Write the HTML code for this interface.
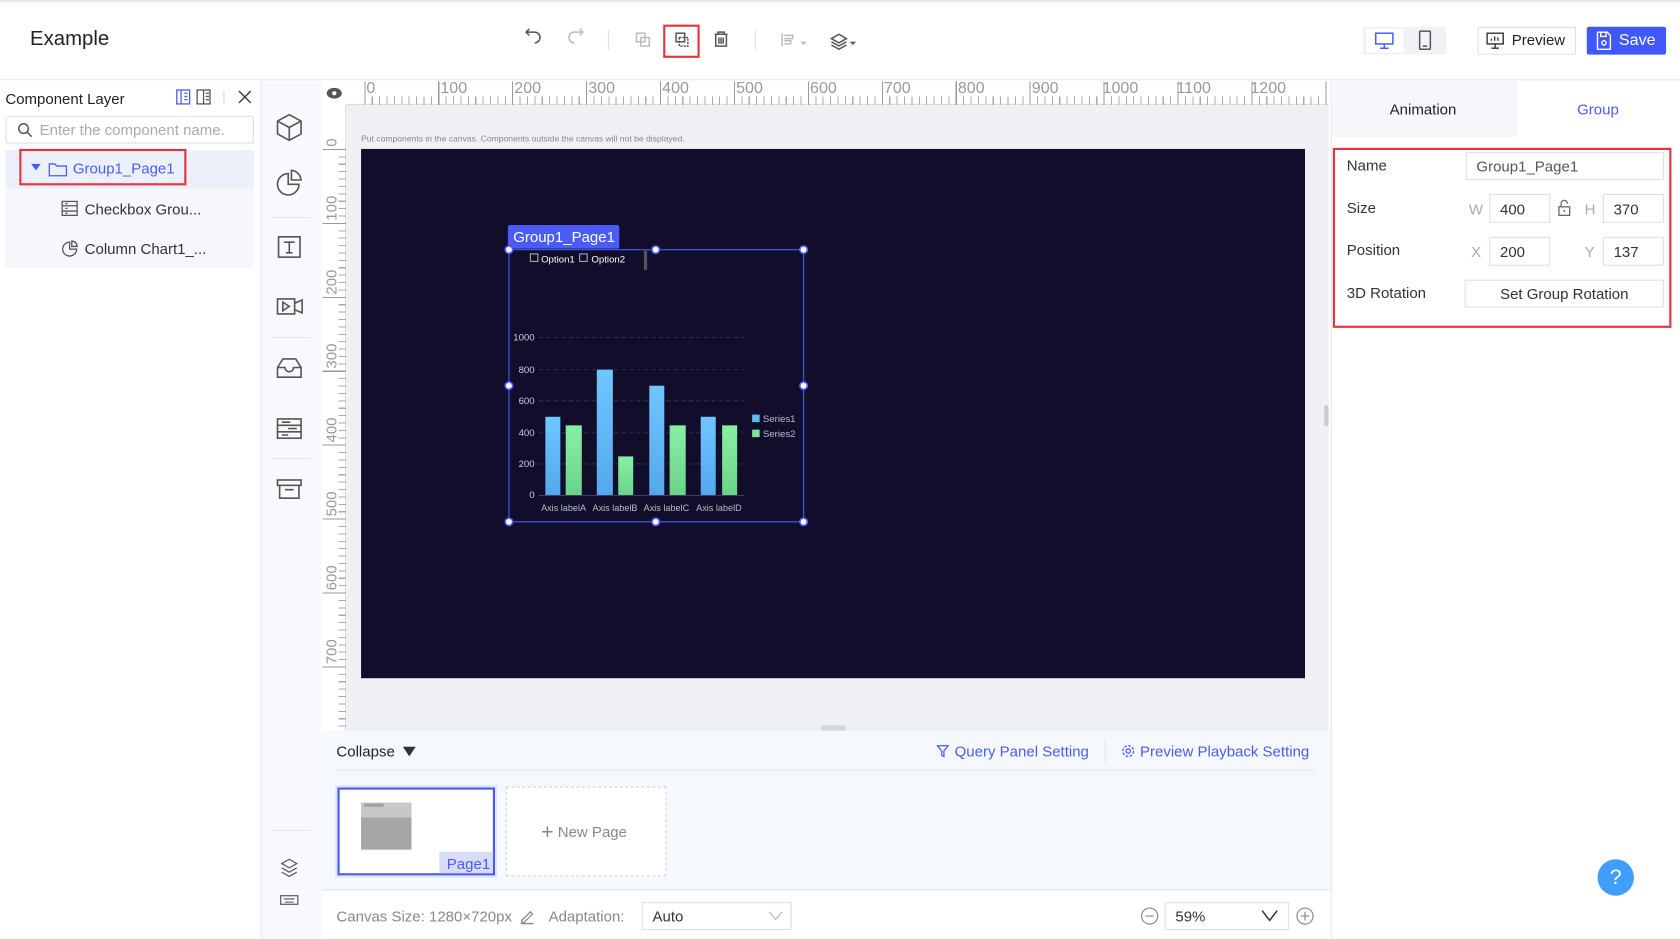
<!DOCTYPE html>
<html><head><meta charset="utf-8">
<style>
*{box-sizing:border-box;margin:0;padding:0}
html,body{width:1680px;height:938px;overflow:hidden;background:#fff;font-family:"Liberation Sans",sans-serif;color:#333}
#w{position:absolute;left:0;top:0;width:1568px;height:876px;transform:scale(1.07143);transform-origin:0 0}
.a{position:absolute}
.t{position:absolute;white-space:nowrap}
.inp{position:absolute;border:1px solid #dcdfe6;background:#fff;font-size:14px;color:#333;padding-left:9px;display:flex;align-items:center}
.lbl{position:absolute;font-size:14px;color:#333}
</style></head><body><div id="w">
<!-- top bar -->
<div class="a" style="left:0;top:0;width:1568px;height:2px;background:#e4e6ea"></div>
<div class="a" style="left:0;top:74px;width:1568px;height:1px;background:#e4e7ed"></div>
<div class="t" style="left:28px;top:26px;font-size:19px;color:#222">Example</div>
<svg class="a" style="left:480px;top:20px" width="330" height="36" viewBox="480 20 330 36" fill="none" stroke-width="1.4">
<path d="M494 33l-3 3 3 3M491 36h8a5 5 0 0 1 0 10" stroke="#555" transform="translate(0,-6)"/>
<path d="M541 33l3 3-3 3M544 36h-8a5 5 0 0 0 0 10" stroke="#bbb" transform="translate(0,-6)"/>
<line x1="568" y1="28" x2="568" y2="47" stroke="#e6e6e6"/>
<rect x="594" y="31" width="8" height="8" stroke="#bbb"/><rect x="598" y="35" width="8" height="8" stroke="#bbb"/>
<rect x="620" y="24" width="32" height="29" stroke="#e8323c" stroke-width="2"/>
<rect x="631" y="31" width="8" height="8" stroke="#555"/><rect x="634" y="35" width="8" height="8" stroke="#555" stroke-dasharray="2 1"/>
<path d="M667 32h12M670 32v-2h6v2M668 32v11h10v-11M671 35v6M673 35v6M675 35v6" stroke="#555"/>
<line x1="705" y1="28" x2="705" y2="47" stroke="#e6e6e6"/>
<path d="M730 31v12M732 33h8v3h-8M732 38h6v3h-6" stroke="#bbb"/><path d="M747 39l3 3 3-3z" fill="#bbb" stroke="none"/>
<path d="M776 36l7-4 7 4-7 4zM776 39l7 4 7-4M776 42l7 4 7-4" stroke="#555"/><path d="M793 39l3 3 3-3z" fill="#555" stroke="none"/>
</svg>
<div class="a" style="left:1272px;top:25px;width:78px;height:26px;background:#f0f2f5;border-radius:2px"></div>
<div class="a" style="left:1275px;top:27px;width:35px;height:22px;background:#fff"></div>
<svg class="a" style="left:1280px;top:28px" width="64" height="20" fill="none" stroke-width="1.4"><rect x="4" y="3" width="16" height="10" stroke="#4a5cf5"/><path d="M8 17h8M12 13v4" stroke="#4a5cf5"/><rect x="45" y="1" width="10" height="17" rx="1" stroke="#555"/><path d="M48 15h4" stroke="#555"/></svg>
<div class="a" style="left:1379px;top:25px;width:92px;height:26px;border:1px solid #dcdfe6;border-radius:2px"></div>
<svg class="a" style="left:1387px;top:30px" width="18" height="16" fill="none" stroke="#333" stroke-width="1.3"><rect x="1" y="1" width="15" height="10"/><path d="M5 15h7M8.5 11v4M5 8v-2M8 8v-4M11 8v-3"/></svg>
<div class="t" style="left:1411px;top:29px;font-size:14px;color:#222">Preview</div>
<div class="a" style="left:1481px;top:25px;width:74px;height:26px;background:#4058f8;border-radius:2px"></div>
<svg class="a" style="left:1489px;top:29px" width="16" height="18" fill="none" stroke="#fff" stroke-width="1.3"><path d="M2 1h9l3 3v13h-12z"/><rect x="5" y="1" width="5" height="4"/><circle cx="8" cy="11" r="2"/></svg>
<div class="t" style="left:1511px;top:29px;font-size:15px;color:#fff">Save</div>

<!-- left panel -->
<div class="a" style="left:0;top:75px;width:243px;height:801px;background:#fff"></div>
<div class="t" style="left:5px;top:84px;font-size:14px;color:#222">Component Layer</div>
<svg class="a" style="left:164px;top:83px" width="75" height="16" fill="none" stroke-width="1.2"><rect x="1" y="1" width="12" height="13" stroke="#4a5cf5"/><path d="M5 1v13M8 4h3M8 7h3M8 10h3" stroke="#4a5cf5"/><rect x="20" y="1" width="12" height="13" stroke="#555"/><path d="M26 1v13M28 4h3M28 7h3M28 10h3" stroke="#555"/><path d="M45 2v12" stroke="#ddd"/><path d="M59 2l11 11M70 2l-11 11" stroke="#444" stroke-width="1.4"/></svg>
<div class="a" style="left:5px;top:108px;width:232px;height:26px;border:1px solid #dcdfe6;border-radius:2px"></div>
<svg class="a" style="left:16px;top:114px" width="16" height="16" fill="none" stroke="#555" stroke-width="1.4"><circle cx="6" cy="6" r="4.5"/><path d="M9.5 9.5l4 4"/></svg>
<div class="t" style="left:37px;top:113px;font-size:14px;color:#aaa">Enter the component name.</div>
<div class="a" style="left:5px;top:140px;width:232px;height:110px;background:#f5f7fb"></div>
<div class="a" style="left:5px;top:140px;width:232px;height:36px;background:#ebf0fb"></div>
<div class="a" style="left:18px;top:139px;width:156px;height:34px;border:2px solid #e8323c"></div>
<svg class="a" style="left:28px;top:150px" width="40" height="16" fill="none"><path d="M1 3h9l-4.5 6z" fill="#4a5cf5"/><path d="M18 3h5l2 2h9v9h-16z" stroke="#4a5cf5" stroke-width="1.2"/></svg>
<div class="t" style="left:68px;top:149px;font-size:14px;color:#4a5cf5">Group1_Page1</div>
<svg class="a" style="left:57px;top:187px" width="16" height="16" fill="none" stroke="#555" stroke-width="1.2"><rect x="1" y="1" width="14" height="13"/><path d="M1 5h14M1 10h14M4 3h2M4 7.5h2M4 12h2"/></svg>
<div class="t" style="left:79px;top:187px;font-size:14px;color:#333">Checkbox Grou...</div>
<svg class="a" style="left:57px;top:224px" width="16" height="16" fill="none" stroke="#555" stroke-width="1.2"><path d="M8 2a6.5 6.5 0 1 0 6.5 6.5H8z"/><path d="M10 1a5 5 0 0 1 5 5h-5z"/></svg>
<div class="t" style="left:79px;top:224px;font-size:14px;color:#333">Column Chart1_...</div>

<!-- icon bar -->
<div class="a" style="left:243px;top:75px;width:57px;height:801px;background:#f7f9fc;border-left:1px solid #eceef2"></div>
<svg class="a" style="left:243px;top:75px" width="57" height="801" fill="none" stroke="#555" stroke-width="1.5">
<path d="M27 32l11 6v12l-11 6-11-6v-12zM16 38l11 6 11-6M27 44v12"/>
<path d="M26 87a10 10 0 1 0 10 10h-10z"/><path d="M29 84a10 10 0 0 1 9 9h-9z"/>
<line x1="10" y1="128" x2="47" y2="128" stroke="#e3e6ea" stroke-width="1"/>
<rect x="17" y="146" width="20" height="19"/><path d="M22 151h10M27 151v10M24 161h6"/>
<rect x="16" y="204" width="16" height="14"/><path d="M32 208l7-3v12l-7-3M21 207l6 4-6 4z"/>
<line x1="10" y1="240" x2="47" y2="240" stroke="#e3e6ea" stroke-width="1"/>
<path d="M16 268l5-8h12l5 8v9h-22zM16 268h7a4 4 0 0 0 8 0h7"/>
<rect x="16" y="316" width="22" height="18"/><path d="M16 322h22M16 328h22M20 319h8M26 325h8M20 331h6"/>
<line x1="10" y1="353" x2="47" y2="353" stroke="#e3e6ea" stroke-width="1"/>
<rect x="16" y="373" width="22" height="5"/><path d="M18 378v12h18v-12M23 382h8"/>
<line x1="10" y1="700" x2="47" y2="700" stroke="#e3e6ea" stroke-width="1"/>
<path d="M20 731l7-4 7 4-7 4zM20 735l7 4 7-4M20 739l7 4 7-4" stroke-width="1.1"/>
<rect x="19" y="761" width="16" height="8" stroke-width="1.1"/><path d="M22 764h10M23 767h8" stroke-width="1"/>
</svg>

<!-- rulers -->
<div class="a" style="left:300px;top:75px;width:940px;height:23px;background:#fff;border-bottom:1px solid #ddd"></div>
<div class="a" style="left:340px;top:90px;width:900px;height:8px;background:repeating-linear-gradient(90deg,#aaa 0 1px,transparent 1px 6.9px)"></div>
<div class="a" style="left:340px;top:76px;width:900px;height:22px;background:repeating-linear-gradient(90deg,#999 0 1px,transparent 1px 69px)"></div>
<div class="t" style="left:342px;top:74px;font-size:15px;color:#999">0</div>
<div class="t" style="left:411px;top:74px;font-size:15px;color:#999">100</div>
<div class="t" style="left:480px;top:74px;font-size:15px;color:#999">200</div>
<div class="t" style="left:549px;top:74px;font-size:15px;color:#999">300</div>
<div class="t" style="left:618px;top:74px;font-size:15px;color:#999">400</div>
<div class="t" style="left:687px;top:74px;font-size:15px;color:#999">500</div>
<div class="t" style="left:756px;top:74px;font-size:15px;color:#999">600</div>
<div class="t" style="left:825px;top:74px;font-size:15px;color:#999">700</div>
<div class="t" style="left:894px;top:74px;font-size:15px;color:#999">800</div>
<div class="t" style="left:963px;top:74px;font-size:15px;color:#999">900</div>
<div class="t" style="left:1029px;top:74px;font-size:15px;color:#999">1000</div>
<div class="t" style="left:1098px;top:74px;font-size:15px;color:#999">1100</div>
<div class="t" style="left:1167px;top:74px;font-size:15px;color:#999">1200</div>
<div class="a" style="left:300px;top:75px;width:23px;height:23px;background:#fff"></div>
<svg class="a" style="left:304px;top:80px" width="16" height="14"><ellipse cx="8" cy="7" rx="7" ry="5" fill="#555"/><circle cx="8" cy="7" r="2" fill="#fff"/></svg>
<div class="a" style="left:300px;top:98px;width:23px;height:584px;background:#fff;border-right:1px solid #ddd"></div>
<div class="a" style="left:316px;top:139px;width:7px;height:543px;background:repeating-linear-gradient(180deg,#aaa 0 1px,transparent 1px 6.9px)"></div>
<div class="a" style="left:301px;top:139px;width:22px;height:543px;background:repeating-linear-gradient(180deg,#999 0 1px,transparent 1px 69px)"></div>
<div class="a" style="left:323px;top:98px;width:917px;height:584px;background:#eef0f3"></div>
<div class="a" style="left:1236px;top:378px;width:4px;height:20px;background:#ccc;border-radius:2px"></div>
<div class="a" style="left:766px;top:677px;width:24px;height:5px;background:#d5d7db;border-radius:3px"></div>
<div class="t" style="left:337px;top:125px;font-size:8px;color:#888">Put components in the canvas. Components outside the canvas will not be displayed.</div>
<div class="a" style="left:337px;top:139px;width:881px;height:494px;background:#110d2b"></div>

<!-- chart -->
<svg class="a" style="left:0;top:0" width="1568" height="876" font-family="Liberation Sans,sans-serif">
<g font-size="9" fill="#ccd" text-anchor="end">
<g stroke="#2a3050" stroke-dasharray="4 3"><line x1="503" y1="315" x2="695" y2="315"/><line x1="503" y1="345" x2="695" y2="345"/><line x1="503" y1="374" x2="695" y2="374"/><line x1="503" y1="404" x2="695" y2="404"/><line x1="503" y1="433" x2="695" y2="433"/></g>
<line x1="503" y1="462.5" x2="695" y2="462.5" stroke="#3a4060"/>
<text x="499" y="318">1000</text><text x="499" y="348">800</text><text x="499" y="377">600</text><text x="499" y="407">400</text><text x="499" y="436">200</text><text x="499" y="465">0</text>
</g>
<defs><linearGradient id="b" x1="0" y1="0" x2="0" y2="1"><stop offset="0" stop-color="#6ec6ff"/><stop offset="1" stop-color="#55a8ec"/></linearGradient><linearGradient id="g" x1="0" y1="0" x2="0" y2="1"><stop offset="0" stop-color="#88f0a4"/><stop offset="1" stop-color="#6cd488"/></linearGradient></defs>
<rect x="509" y="389" width="14" height="73" fill="url(#b)"/><rect x="528" y="397" width="15" height="65" fill="url(#g)"/>
<rect x="557" y="345" width="15" height="117" fill="url(#b)"/><rect x="577" y="426" width="14" height="36" fill="url(#g)"/>
<rect x="606" y="360" width="14" height="102" fill="url(#b)"/><rect x="625" y="397" width="15" height="65" fill="url(#g)"/>
<rect x="654" y="389" width="14" height="73" fill="url(#b)"/><rect x="674" y="397" width="14" height="65" fill="url(#g)"/>
<g font-size="8.5" fill="#bbc" text-anchor="middle"><text x="526" y="477">Axis labelA</text><text x="574" y="477">Axis labelB</text><text x="622" y="477">Axis labelC</text><text x="671" y="477">Axis labelD</text></g>
<rect x="702" y="387" width="7" height="7" fill="#62b7f6"/><rect x="702" y="401" width="7" height="7" fill="#7de59a"/>
<g font-size="9" fill="#bbc"><text x="712" y="394">Series1</text><text x="712" y="408">Series2</text></g>
<rect x="495" y="237" width="7" height="7" fill="none" stroke="#aaa"/><text x="505" y="245" font-size="9" fill="#fff">Option1</text>
<rect x="541" y="237" width="7" height="7" fill="none" stroke="#aaa"/><text x="552" y="245" font-size="9" fill="#fff">Option2</text>
<rect x="601" y="234" width="3" height="18" fill="#555"/>
<rect x="474" y="210" width="104" height="22" rx="2" fill="#4a5cf5"/>
<text x="479" y="226" font-size="14" fill="#fff">Group1_Page1</text>
<rect x="475" y="233" width="275" height="254" fill="none" stroke="#4150e0" stroke-width="1.2"/>
<g fill="#fff" stroke="#4a5cf5" stroke-width="1.5"><circle cx="475" cy="233" r="3.5"/><circle cx="612" cy="233" r="3.5"/><circle cx="750" cy="233" r="3.5"/><circle cx="475" cy="360" r="3.5"/><circle cx="750" cy="360" r="3.5"/><circle cx="475" cy="487" r="3.5"/><circle cx="612" cy="487" r="3.5"/><circle cx="750" cy="487" r="3.5"/></g>
<g font-size="14" fill="#999">
<text transform="translate(314,137) rotate(-90)">0</text>
<text transform="translate(314,206) rotate(-90)">100</text>
<text transform="translate(314,275) rotate(-90)">200</text>
<text transform="translate(314,344) rotate(-90)">300</text>
<text transform="translate(314,413) rotate(-90)">400</text>
<text transform="translate(314,482) rotate(-90)">500</text>
<text transform="translate(314,551) rotate(-90)">600</text>
<text transform="translate(314,620) rotate(-90)">700</text>
</g>
</svg>

<!-- bottom page area -->
<div class="a" style="left:300px;top:682px;width:942px;height:149px;background:#f5f8fc"></div>
<div class="t" style="left:314px;top:693px;font-size:14px;color:#222">Collapse</div>
<svg class="a" style="left:375px;top:696px" width="14" height="12"><path d="M1 1h12l-6 9z" fill="#333"/></svg>
<svg class="a" style="left:874px;top:694px" width="12" height="14" fill="none" stroke="#4a5cf5" stroke-width="1.2"><path d="M1 2h10l-4 5v5l-2-1v-4z"/></svg>
<div class="t" style="left:891px;top:693px;font-size:14px;color:#4a5cf5">Query Panel Setting</div>
<div class="a" style="left:1031px;top:690px;width:1px;height:22px;background:#e3e6ea"></div>
<svg class="a" style="left:1046px;top:694px" width="14" height="14" fill="none" stroke="#4a5cf5" stroke-width="1.2"><circle cx="7" cy="7" r="2"/><circle cx="7" cy="7" r="5" stroke-dasharray="2.5 1.4"/></svg>
<div class="t" style="left:1064px;top:693px;font-size:14px;color:#4a5cf5">Preview Playback Setting</div>
<div class="a" style="left:313px;top:718px;width:914px;height:1px;background:#e3e6ea"></div>
<div class="a" style="left:313px;top:733px;width:151px;height:86px;background:#dfe3fa"></div>
<div class="a" style="left:315px;top:735px;width:147px;height:82px;background:#fff;border:2px solid #4a5cf5"></div>
<div class="a" style="left:337px;top:749px;width:47px;height:44px;background:#a6a6a6"></div>
<div class="a" style="left:337px;top:749px;width:47px;height:14px;background:#c8c8c8"></div>
<div class="a" style="left:340px;top:750px;width:18px;height:3px;background:#a0a0a0"></div>
<div class="a" style="left:410px;top:795px;width:50px;height:20px;background:#d8dcfa"></div>
<div class="t" style="left:417px;top:798px;font-size:14px;color:#4a5cf5">Page1</div>
<div class="a" style="left:472px;top:734px;width:150px;height:84px;background:#fff;border:1px dashed #cfd3da"></div>
<div class="t" style="left:505px;top:766px;font-size:14px;color:#888"><span style="font-size:20px;vertical-align:-2px">+</span> New Page</div>

<!-- bottom bar -->
<div class="a" style="left:300px;top:830px;width:942px;height:1px;background:#e3e6ea"></div>
<div class="t" style="left:314px;top:847px;font-size:14px;color:#888">Canvas Size: 1280×720px</div>
<svg class="a" style="left:484px;top:847px" width="16" height="16" fill="none" stroke="#888" stroke-width="1.2"><path d="M3 12l8-8 2 2-8 8h-2zM2 15h12"/></svg>
<div class="t" style="left:512px;top:847px;font-size:14px;color:#888">Adaptation:</div>
<div class="inp" style="left:599px;top:842px;width:140px;height:26px">Auto</div>
<svg class="a" style="left:717px;top:850px" width="14" height="10" fill="none" stroke="#bbb" stroke-width="1.2"><path d="M1 1l6 7 6-7"/></svg>
<svg class="a" style="left:1064px;top:846px" width="18" height="18" fill="none" stroke="#888" stroke-width="1.1"><circle cx="9" cy="9" r="7.5"/><path d="M5 9h8"/></svg>
<div class="inp" style="left:1087px;top:842px;width:116px;height:26px">59%</div>
<svg class="a" style="left:1177px;top:849px" width="16" height="12" fill="none" stroke="#333" stroke-width="1.4"><path d="M1 1l7 9 7-9"/></svg>
<svg class="a" style="left:1209px;top:846px" width="18" height="18" fill="none" stroke="#888" stroke-width="1.1"><circle cx="9" cy="9" r="7.5"/><path d="M5 9h8M9 5v8"/></svg>

<!-- right panel -->
<div class="a" style="left:1242px;top:75px;width:1px;height:801px;background:#e4e7ed"></div>
<div class="a" style="left:1243px;top:75px;width:173px;height:53px;background:#f5f7fa"></div>
<div class="t" style="left:1297px;top:94px;font-size:14px;color:#222">Animation</div>
<div class="t" style="left:1472px;top:94px;font-size:14px;color:#4a5cf5">Group</div>
<div class="a" style="left:1244px;top:138px;width:316px;height:168px;border:2px solid #e8323c"></div>
<div class="lbl" style="left:1257px;top:146px">Name</div>
<div class="inp" style="left:1368px;top:142px;width:185px;height:26px;color:#555">Group1_Page1</div>
<div class="lbl" style="left:1257px;top:186px">Size</div>
<div class="t" style="left:1371px;top:187px;font-size:14px;color:#aaa">W</div>
<div class="inp" style="left:1390px;top:181px;width:57px;height:27px">400</div>
<svg class="a" style="left:1453px;top:186px" width="14" height="16" fill="none" stroke="#666" stroke-width="1.2"><rect x="2" y="7" width="10" height="8"/><path d="M4 7v-3a3 3 0 0 1 6 0"/><path d="M7 10v2"/></svg>
<div class="t" style="left:1479px;top:187px;font-size:14px;color:#aaa">H</div>
<div class="inp" style="left:1496px;top:181px;width:57px;height:27px">370</div>
<div class="lbl" style="left:1257px;top:225px">Position</div>
<div class="t" style="left:1373px;top:227px;font-size:14px;color:#aaa">X</div>
<div class="inp" style="left:1390px;top:221px;width:57px;height:27px">200</div>
<div class="t" style="left:1479px;top:227px;font-size:14px;color:#aaa">Y</div>
<div class="inp" style="left:1496px;top:221px;width:57px;height:27px">137</div>
<div class="lbl" style="left:1257px;top:265px">3D Rotation</div>
<div class="inp" style="left:1367px;top:261px;width:186px;height:26px;justify-content:center;padding:0">Set Group Rotation</div>
<div class="a" style="left:1491px;top:802px;width:34px;height:34px;border-radius:50%;background:#409eff;color:#fff;font-size:20px;text-align:center;line-height:34px">?</div>
</div></body></html>
